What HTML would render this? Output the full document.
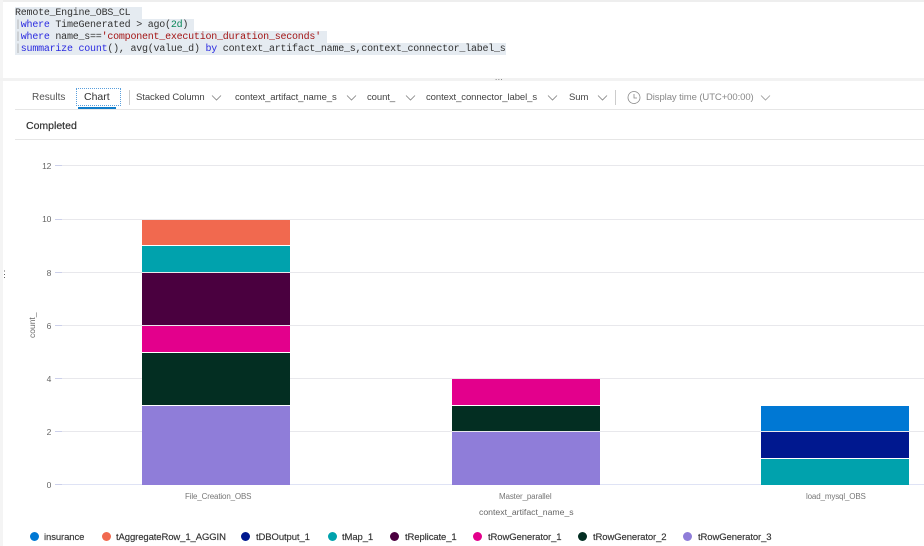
<!DOCTYPE html>
<html><head><meta charset="utf-8"><style>
html,body{margin:0;padding:0;background:#fff;}
body{width:924px;height:546px;position:relative;overflow:hidden;font-family:"Liberation Sans",sans-serif;}
.a{position:absolute;white-space:nowrap;}
.code{font-family:"Liberation Mono",monospace;font-size:10px;letter-spacing:-.23px;line-height:12px;color:#333;}
.sel{background:#e5ebf1;height:12px;}
.k{color:#2a2ae0}.s{color:#a31515}.n{color:#098658}
.t{font-size:9.5px;letter-spacing:-.08px;color:#444;}
.g{position:absolute;left:62px;width:862px;height:1px;background:#e8e8ec;}
.tk{position:absolute;left:55px;width:7px;height:1px;background:#ccd0ea;}
.y{position:absolute;width:20px;left:31px;text-align:right;font-size:8.5px;letter-spacing:-.3px;color:#666;}
.b{position:absolute;}
.d{position:absolute;top:532px;width:9px;height:9px;border-radius:50%;}
.l{position:absolute;top:532px;font-size:9.5px;letter-spacing:-.1px;color:#333;-webkit-text-stroke:.15px #333;white-space:nowrap;line-height:12px;}
.x{font-size:8px;letter-spacing:-.15px;color:#777;}
</style></head><body>
<div class="a" style="left:0;top:0;width:924px;height:2px;background:#eee"></div>
<div class="a" style="left:0;top:0;width:3px;height:546px;background:#f4f4f4"></div>
<div class="a sel" style="left:15px;top:7px;width:127px"></div>
<div class="a sel" style="left:15px;top:19px;width:179px"></div>
<div class="a sel" style="left:15px;top:31px;width:312px"></div>
<div class="a sel" style="left:15px;top:43px;width:491px"></div>
<div class="a code" style="left:15px;top:8px">Remote_Engine_OBS_CL</div>
<div class="a code" style="left:15px;top:20px"><span style="color:#aaa">|</span><span class="k">where</span> TimeGenerated &gt; ago(<span class="n">2d</span>)</div>
<div class="a code" style="left:15px;top:32px"><span style="color:#aaa">|</span><span class="k">where</span> name_s==<span class="s">'component_execution_duration_seconds'</span></div>
<div class="a code" style="left:15px;top:44px"><span style="color:#aaa">|</span><span class="k">summarize</span> <span class="k">count</span>(), avg(value_d) <span class="k">by</span> context_artifact_name_s,context_connector_label_s</div>
<div class="a" style="left:0;top:78px;width:924px;height:3px;background:#f2f2f2"></div>
<div class="a" style="left:495px;top:73px;font-size:8px;color:#555;letter-spacing:.5px">...</div>

<div class="a" style="left:32px;top:92px;font-size:10px;color:#555">Results</div>
<div class="a" style="left:76px;top:88px;width:43px;height:16px;border:1px dotted #5a9fdc"></div>
<div class="a" style="left:84px;top:91px;font-size:10.5px;color:#333">Chart</div>
<div class="a" style="left:78px;top:107px;width:38px;height:2px;background:#0f7cc9"></div>
<div class="a" style="left:15px;top:109px;width:909px;height:1px;background:#e6e6e6"></div>
<div class="a" style="left:129px;top:90px;width:1px;height:15px;background:#ccc"></div>
<div class="a t" style="left:136px;top:92px">Stacked Column</div>
<div class="a t" style="left:235px;top:92px">context_artifact_name_s</div>
<div class="a t" style="left:367px;top:92px">count_</div>
<div class="a t" style="left:426px;top:92px">context_connector_label_s</div>
<div class="a t" style="left:569px;top:92px">Sum</div>
<div class="a" style="left:615px;top:90px;width:1px;height:15px;background:#ccc"></div>
<div class="a t" style="left:646px;top:92px;color:#888">Display time (UTC+00:00)</div>
<svg class="a" style="left:0;top:0" width="924" height="110" fill="none" stroke="#808080" stroke-width=".8">
<path d="M212 95.5l4.5 4.5 4.5-4.5M347 95.5l4.5 4.5 4.5-4.5M406 95.5l4.5 4.5 4.5-4.5M548 95.5l4.5 4.5 4.5-4.5M598 95.5l4.5 4.5 4.5-4.5"/>
<path d="M761 95.5l4.5 4.5 4.5-4.5" stroke="#999"/>
<circle cx="634" cy="97.5" r="6" stroke="#888"/><path d="M634 94v4h3" stroke="#888"/>
</svg>
<div class="a" style="left:26px;top:119.5px;font-size:10.5px;color:#333;-webkit-text-stroke:.2px #333">Completed</div>
<div class="a" style="left:15px;top:139px;width:909px;height:1px;background:#e6e6e6"></div>
<div class="a" style="left:0;top:270px;font-size:9px;color:#555;line-height:9px">⋮</div>

<div class="g" style="top:165px"></div><div class="tk" style="top:165px"></div><div class="y" style="top:161px">12</div>
<div class="g" style="top:219px"></div><div class="tk" style="top:219px"></div><div class="y" style="top:214px">10</div>
<div class="g" style="top:272px"></div><div class="tk" style="top:272px"></div><div class="y" style="top:268px">8</div>
<div class="g" style="top:325px"></div><div class="tk" style="top:325px"></div><div class="y" style="top:321px">6</div>
<div class="g" style="top:378px"></div><div class="tk" style="top:378px"></div><div class="y" style="top:374px">4</div>
<div class="g" style="top:431px"></div><div class="tk" style="top:431px"></div><div class="y" style="top:427px">2</div>
<div class="g" style="top:484px;background:#dfe3f5"></div><div class="tk" style="top:484px"></div><div class="y" style="top:480px">0</div>

<div class="b" style="left:142px;top:220px;width:148px;height:25px;background:#f1694f"></div>
<div class="b" style="left:142px;top:246px;width:148px;height:26px;background:#00a2ad"></div>
<div class="b" style="left:142px;top:273px;width:148px;height:52px;background:#4a003f"></div>
<div class="b" style="left:142px;top:326px;width:148px;height:26px;background:#e3008c"></div>
<div class="b" style="left:142px;top:353px;width:148px;height:52px;background:#032e22"></div>
<div class="b" style="left:142px;top:406px;width:148px;height:79px;background:#8f7dd9"></div>

<div class="b" style="left:452px;top:379px;width:148px;height:26px;background:#e3008c"></div>
<div class="b" style="left:452px;top:406px;width:148px;height:25px;background:#032e22"></div>
<div class="b" style="left:452px;top:432px;width:148px;height:53px;background:#8f7dd9"></div>

<div class="b" style="left:761px;top:406px;width:148px;height:25px;background:#0078d4"></div>
<div class="b" style="left:761px;top:432px;width:148px;height:26px;background:#00188f"></div>
<div class="b" style="left:761px;top:459px;width:148px;height:26px;background:#00a2ad"></div>

<div class="a x" style="left:185px;top:492px">File_Creation_OBS</div>
<div class="a x" style="left:499px;top:492px">Master_parallel</div>
<div class="a x" style="left:806px;top:492px">load_mysql_OBS</div>
<div class="a" style="left:479px;top:507px;font-size:8.7px;color:#666">context_artifact_name_s</div>
<div class="a" style="left:27px;top:338px;font-size:8.5px;color:#666;transform:rotate(-90deg);transform-origin:0 0">count_</div>

<div class="d" style="left:30px;background:#0078d4"></div><div class="l" style="left:44px">insurance</div>
<div class="d" style="left:102px;background:#f1694f"></div><div class="l" style="left:116px">tAggregateRow_1_AGGIN</div>
<div class="d" style="left:241px;background:#00188f"></div><div class="l" style="left:256px">tDBOutput_1</div>
<div class="d" style="left:328px;background:#00a2ad"></div><div class="l" style="left:342px">tMap_1</div>
<div class="d" style="left:390px;background:#4a003f"></div><div class="l" style="left:405px">tReplicate_1</div>
<div class="d" style="left:473px;background:#e3008c"></div><div class="l" style="left:488px">tRowGenerator_1</div>
<div class="d" style="left:578px;background:#032e22"></div><div class="l" style="left:593px">tRowGenerator_2</div>
<div class="d" style="left:683px;background:#8f7dd9"></div><div class="l" style="left:698px">tRowGenerator_3</div>
</body></html>
